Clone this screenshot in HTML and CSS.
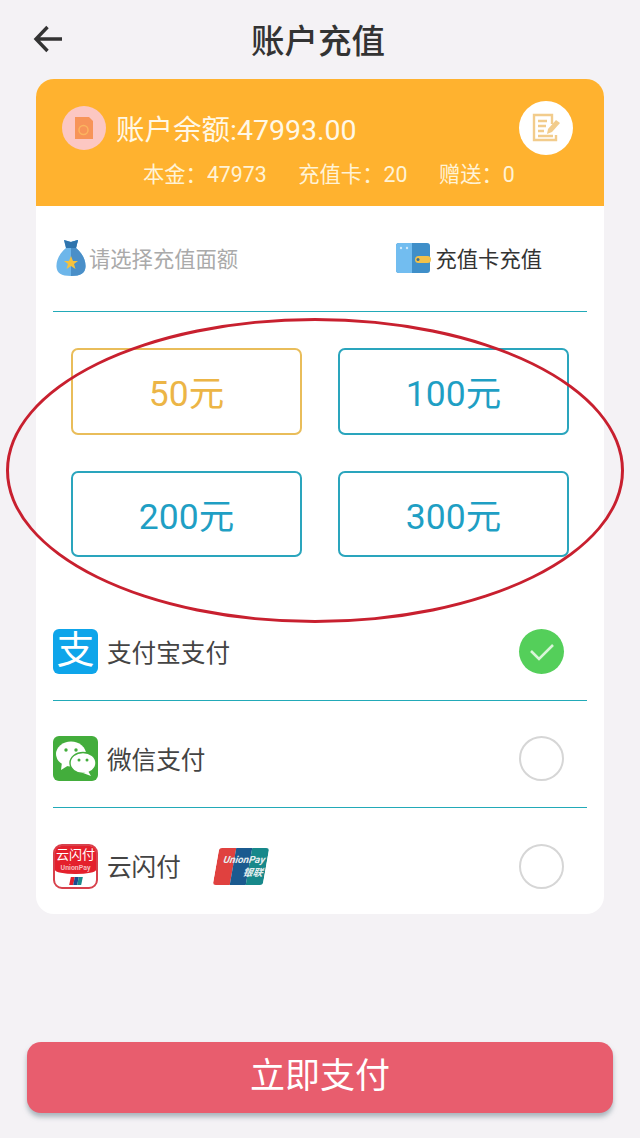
FILE: index.html
```html
<!DOCTYPE html>
<html lang="zh-CN">
<head>
  <meta charset="UTF-8" />
  <meta name="viewport" content="width=device-width, initial-scale=1.0"/>
  <title>账户充值</title>
  <link rel="stylesheet" href="styles.css">
</head>
<body>

  <div class="topbar">
    <svg class="back" width="30" height="28" viewBox="0 0 30 28">
      <path d="M14.5 2 L3 14 L14.5 26 M3 14 H29" fill="none" stroke="#333" stroke-width="3.4"/>
    </svg>
    <h1>账户充值</h1>
  </div>

  <div class="card">
    <div class="balance">
      <div class="balance-row">
        <div class="avatar">
          <svg width="22" height="24" viewBox="0 0 22 24">
            <path d="M2 1 H16 L20 5 V23 H2 Z" fill="#f79458"/>
            <circle cx="10.5" cy="14" r="4.5" fill="none" stroke="#fbb45f" stroke-width="1.5"/>
          </svg>
        </div>
        <div class="balance-text">账户余额:47993.00</div>
        <div class="note">
          <svg width="30" height="30" viewBox="0 0 30 30">
            <path d="M21 11 V2 H3 V27 H25 V22" fill="none" stroke="#f2cc8c" stroke-width="2.4"/>
            <path d="M7 8 H16 M7 13 H15 M7 18 H13 M7 23 H22" stroke="#f2cc8c" stroke-width="2.4"/>
            <path d="M16 21 L17 16 L25 7 L29 10 L21 19 Z" fill="#f2cc8c"/>
          </svg>
        </div>
      </div>
      <div class="balance-sub">
        <span>本金：47973</span>
        <span>充值卡：20</span>
        <span>赠送：0</span>
      </div>
    </div>

    <div class="section">
      <div class="choose">
        <svg width="30" height="36" viewBox="0 0 30 36">
          <path d="M8 0 L15 2 L22 0 L20 8 C26 13 30 20 29.5 27 C29 33 25 36 15 36 C5 36 1 33 .5 27 C0 20 4 13 10 8 Z" fill="#6db6ea"/>
          <path d="M15 2 L22 0 L20 8 C26 13 30 20 29.5 27 C29 33 25 36 15 36 Z" fill="#4a8fc8"/>
          <path d="M8 0 L15 2 L22 0 L20 8 H10 Z" fill="#2f74ad"/>
          <path d="M15 16 L17 21 L22 21 L18 24 L19.5 29 L15 26 L10.500 29 L12 24 L8 21 L13 21 Z" fill="#f5c23e"/>
        </svg>
        <span class="choose-label">请选择充值面额</span>
      </div>
      <div class="card-pay">
        <svg width="35" height="30" viewBox="0 0 35 30">
          <rect x="0" y="0" width="34" height="30" rx="3" fill="#3f8fc9"/>
          <path d="M3 0 H16 V30 H3 Q0 30 0 27 V3 Q0 0 3 0 Z" fill="#72bdf0"/>
          <rect x="19" y="13" width="16" height="7" rx="3.5" fill="#f2c14a"/>
          <circle cx="22" cy="16.5" r="1.5" fill="#3a6d8e"/>
          <circle cx="5" cy="5" r="1.2" fill="#cfe9fb"/>
          <circle cx="11" cy="5" r="1.2" fill="#cfe9fb"/>
        </svg>
        <span>充值卡充值</span>
      </div>
    </div>

    <div class="amounts">
      <div class="amount amount-on">50元</div>
      <div class="amount">100元</div>
      <div class="amount">200元</div>
      <div class="amount">300元</div>
    </div>

    <div class="pay-list">
      <div class="pay-row">
        <div class="logo logo-ali">支</div>
        <span class="pay-name">支付宝支付</span>
        <div class="tick">
          <svg width="26" height="20" viewBox="0 0 26 20">
            <path d="M2 9 L10 17 L24 3" fill="none" stroke="#d9f5d9" stroke-width="2.6"/>
          </svg>
        </div>
      </div>
      <div class="pay-row">
        <div class="logo logo-wx">
          <svg width="45" height="45" viewBox="0 0 45 45">
            <ellipse cx="18" cy="18" rx="15" ry="12.5" fill="#fff"/>
            <path d="M9 26 L8 34 L16 29 Z" fill="#fff"/>
            <ellipse cx="30" cy="27" rx="13" ry="10.5" fill="#fff" stroke="#43ad3c" stroke-width="1.4"/>
            <path d="M35 35 L38 40 L30 37 Z" fill="#fff"/>
            <circle cx="13" cy="14" r="1.7" fill="#43ad3c"/>
            <circle cx="23" cy="14" r="1.7" fill="#43ad3c"/>
            <circle cx="26" cy="24" r="1.5" fill="#43ad3c"/>
            <circle cx="34" cy="24" r="1.5" fill="#43ad3c"/>
          </svg>
        </div>
        <span class="pay-name">微信支付</span>
        <div class="radio"></div>
      </div>
      <div class="pay-row">
        <div class="logo logo-yun">
          <div class="yun-top">
            <span class="yun-name">云闪付</span>
            <span class="yun-en">UnionPay</span>
          </div>
          <div class="yun-bottom">
            <i class="bar-red"></i><i class="bar-blue"></i><i class="bar-teal"></i>
          </div>
        </div>
        <span class="pay-name">云闪付</span>
        <div class="unionpay">
          <i class="up-red"></i><i class="up-blue"></i><i class="up-teal"></i>
          <span class="up-text">UnionPay<br>银联</span>
        </div>
        <div class="radio"></div>
      </div>
    </div>
  </div>

  <div class="pay-btn">立即支付</div>

  <!-- hand-drawn circle round the amounts -->
  <div class="ring"></div>

</body>
</html>
```

FILE: styles.css
```css
body {
  margin: 0;
  height: 1138px;
  overflow: hidden;
  position: relative;
  background: #f4f2f5;
  font-family: Roboto, "Noto Sans CJK SC", sans-serif;
  color: #333;
}

.topbar {
  height: 79px;
  display: flex;
  align-items: center;
  justify-content: center;
  position: relative;
}

.topbar h1 {
  margin: 0 4px 2px 0;
  font-size: 33.5px;
  font-weight: 500;
  color: #333;
}

.back {
  position: absolute;
  left: 33px;
  top: 25px;
}

.card {
  width: 568px;
  height: 835px;
  margin-left: 36px;
  background: #fff;
  border-radius: 18px;
  overflow: hidden;
}

.balance {
  height: 127px;
  background: #ffb22f;
  color: #fff;
  box-sizing: border-box;
  padding-top: 22px;
}

.balance-row {
  display: flex;
  align-items: center;
  height: 54px;
  padding: 0 31px 0 26px;
}

.avatar {
  width: 44px;
  height: 44px;
  border-radius: 50%;
  background: #fcc7c2;
  display: flex;
  align-items: center;
  justify-content: center;
}

.balance-text {
  flex: 1;
  margin: 0 0 2px 10px;
  font-size: 28.5px;
  color: #fff8e6;
}

.note {
  width: 54px;
  height: 54px;
  border-radius: 50%;
  background: #fff;
  display: flex;
  align-items: center;
  justify-content: center;
}

.balance-sub {
  display: flex;
  gap: 31.5px;
  margin: 5px 0 0 107px;
  font-size: 21.3px;
  line-height: 30px;
  color: #fff3d6;
}

.section {
  height: 106px;
  margin: 0 17px;
  box-sizing: border-box;
  border-bottom: 1px solid #22aab8;
  display: flex;
  align-items: center;
  justify-content: space-between;
  padding: 0 45px 2px 3px;
}

.choose, .card-pay {
  display: flex;
  align-items: center;
  font-size: 21.3px;
  color: #333;
}

.choose-label {
  margin-left: 3px;
  color: #aaa;
}

.card-pay span {
  margin-left: 5px;
}

.amounts {
  display: grid;
  grid-template-columns: 231px 231px;
  grid-template-rows: 87px 86px;
  gap: 36px;
  padding: 36px 35px;
  height: 281px;
  box-sizing: border-box;
}

.amount {
  border: 2px solid #2aa5bd;
  border-radius: 7px;
  display: flex;
  align-items: center;
  justify-content: center;
  padding-bottom: 2px;
  font-size: 35.5px;
  color: #1f9fc4;
}

.amount-on {
  border-color: #e9bd5a;
  color: #ecb546;
}

.pay-list {
  padding-top: 1px;
}

.pay-row {
  height: 107px;
  margin: 0 17px;
  box-sizing: border-box;
  padding-top: 9px;
  border-bottom: 1px solid #22aab8;
  display: flex;
  align-items: center;
}

.pay-row:last-child {
  border-bottom: none;
}

.logo {
  width: 45px;
  height: 45px;
  border-radius: 6px;
  flex: none;
}

.logo-ali {
  background: #0ea5ea;
  color: #fff;
  font-size: 38px;
  font-weight: 400;
  line-height: 43px;
  text-align: center;
}

.logo-wx {
  background: #43ad3c;
}

.logo-yun {
  border-radius: 9px;
  background: #fff;
  box-sizing: border-box;
  border: 2px solid #d8414c;
}

.yun-top {
  height: 28px;
  background: #e4202c;
  color: #fff;
  text-align: center;
  border-radius: 6px 6px 20px 20px / 6px 6px 4px 4px;
}

.yun-name {
  display: block;
  font-size: 13px;
  line-height: 18px;
}

.yun-en {
  display: block;
  font-size: 7px;
  font-weight: 700;
  line-height: 8px;
  color: #f6b9bc;
}

.yun-bottom {
  display: flex;
  justify-content: center;
  margin-top: 3px;
}

.yun-bottom i {
  width: 4px;
  height: 8px;
  transform: skewX(-12deg);
}

.bar-red { background: #e4202c; }
.bar-blue { background: #1d4a8f; }
.bar-teal { background: #1a8a8c; }

.pay-name {
  margin: 0 0 2px 9px;
  font-size: 24.6px;
  color: #444;
}

.tick, .radio {
  width: 45px;
  height: 45px;
  margin-left: auto;
  margin-right: 23px;
  border-radius: 50%;
  box-sizing: border-box;
  flex: none;
}

.tick {
  background: #54cf5a;
  display: flex;
  align-items: center;
  justify-content: center;
}

.radio {
  border: 2px solid #d6d6d6;
}

.unionpay {
  width: 50px;
  height: 37px;
  margin-left: 35px;
  display: flex;
  position: relative;
  transform: skewX(-10deg);
  border-radius: 3px;
  overflow: hidden;
}

.unionpay i {
  flex: 1;
}

.up-red { background: #e0413f; }
.up-blue { background: #1b5a8f; }
.up-teal { background: #17888a; }

.up-text {
  position: absolute;
  inset: 0;
  color: #e6eef0;
  font-size: 10px;
  font-weight: 700;
  font-style: italic;
  line-height: 13px;
  text-align: right;
  padding: 5px 2px 0 0;
}

.pay-btn {
  width: 586px;
  height: 71px;
  box-sizing: border-box;
  margin: 128px 0 0 27px;
  padding-bottom: 10px;
  background: #e85d6e;
  border-radius: 14px;
  box-shadow: 0 4px 5px rgba(120, 140, 150, 0.6);
  color: #fff;
  font-size: 35px;
  display: flex;
  align-items: center;
  justify-content: center;
}

.ring {
  position: absolute;
  left: 6px;
  top: 318px;
  width: 618px;
  height: 305px;
  box-sizing: border-box;
  border: 3px solid #c8202f;
  border-radius: 50%;
}
```
